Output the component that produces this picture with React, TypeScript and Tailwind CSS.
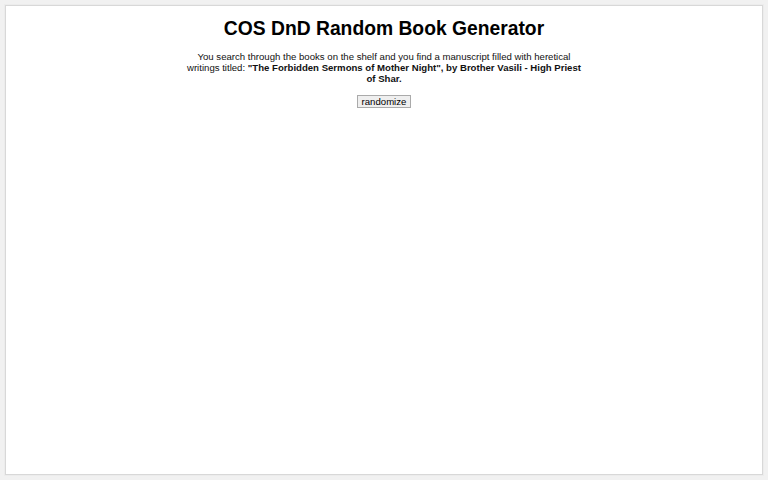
export default function App() {
  return (
    <div className="h-[480px] w-[768px] bg-[#f1f1f1] p-[5px] font-['Liberation_Sans',Arial,sans-serif]">
      <div className="flex h-full flex-col items-center border border-[#d8d8d8] bg-white text-black shadow-[0_0_0_1px_#ececec]">
        <h1 className="mt-[11px] text-[19.3px] font-bold leading-[23px]">COS DnD Random Book Generator</h1>
        <p className="mt-[11px] w-[398px] text-center text-[9.6px] leading-[11px] text-[#111]">
          You search through the books on the shelf and you find a manuscript filled with heretical
          writings titled:{" "}
          <b>"The Forbidden Sermons of Mother Night", by Brother Vasili - High Priest of Shar.</b>
        </p>
        <button className="mt-[11px] border border-[#aaa] bg-[#efefef] px-[4px] text-[9.6px] leading-[11px]">
          randomize
        </button>
      </div>
    </div>
  );
}
